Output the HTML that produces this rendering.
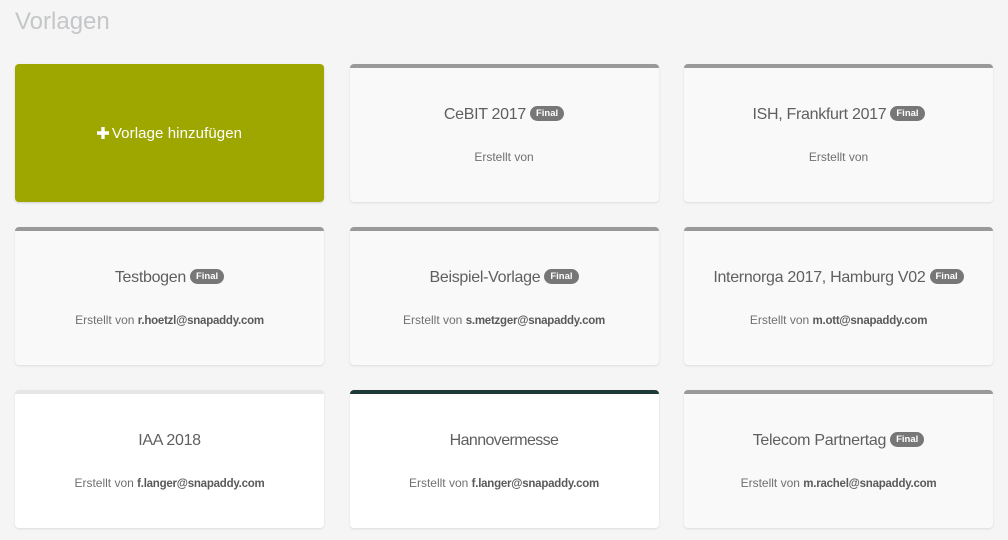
<!DOCTYPE html>
<html lang="de">
<head>
<meta charset="utf-8">
<title>Vorlagen</title>
<style>
html,body{margin:0;padding:0;width:1008px;height:540px;overflow:hidden;background:#f5f5f5;font-family:"Liberation Sans",sans-serif}
h1{position:absolute;left:15px;top:7px;margin:0;font-size:24px;line-height:29px;font-weight:400;color:#c4c6c8}
.card{position:absolute;width:309px;height:138px;box-sizing:border-box;border-radius:4px;border-top:4.5px solid #999;background:#f9f9f9;box-shadow:0 1px 2px rgba(0,0,0,.1);text-align:center;color:#666}
.white{background:#fff}
.t{position:absolute;left:0;right:0;top:36.5px;height:20px;line-height:20px;font-size:16px;letter-spacing:-.3px;color:#5f5f5f;white-space:nowrap}
.s{position:absolute;left:0;right:0;top:80.5px;height:16px;line-height:16px;font-size:12px;color:#707070;white-space:nowrap}
.s b{font-size:11.5px;color:#5a5a5a;letter-spacing:-.24px}
.b{display:inline-block;vertical-align:3px;margin-left:4px;height:15px;line-height:15px;padding:0 6px;border-radius:8px;background:#777;color:#fff;font-size:9.5px;font-weight:700;letter-spacing:0}
.add{position:absolute;left:15px;top:64px;width:309px;height:138px;border-radius:4px;background:#9ea700;box-shadow:0 1px 2px rgba(0,0,0,.15);color:#fff;font-size:15px;letter-spacing:.1px;line-height:139px;text-align:center}
.add svg{vertical-align:-1px;margin-right:3px}
</style>
</head>
<body>
<h1>Vorlagen</h1>
<div class="add"><svg width="12" height="12" viewBox="0 0 12 12"><path d="M4.3 0h3.4v4.3H12v3.4H7.7V12H4.3V7.7H0V4.3h4.3z" fill="#fff"/></svg>Vorlage hinzufügen</div>

<div class="card" style="left:349.5px;top:64px"><div class="t">CeBIT 2017<span class="b">Final</span></div><div class="s">Erstellt von</div></div>
<div class="card" style="left:684px;top:64px"><div class="t">ISH, Frankfurt 2017<span class="b">Final</span></div><div class="s">Erstellt von</div></div>

<div class="card" style="left:15px;top:227px"><div class="t">Testbogen<span class="b">Final</span></div><div class="s">Erstellt von <b>r.hoetzl@snapaddy.com</b></div></div>
<div class="card" style="left:349.5px;top:227px"><div class="t">Beispiel-Vorlage<span class="b">Final</span></div><div class="s">Erstellt von <b>s.metzger@snapaddy.com</b></div></div>
<div class="card" style="left:684px;top:227px"><div class="t">Internorga 2017, Hamburg V02<span class="b">Final</span></div><div class="s">Erstellt von <b>m.ott@snapaddy.com</b></div></div>

<div class="card white" style="left:15px;top:390px;border-top-color:#e6e6e6"><div class="t">IAA 2018</div><div class="s">Erstellt von <b>f.langer@snapaddy.com</b></div></div>
<div class="card white" style="left:349.5px;top:390px;border-top-color:#1d3a36"><div class="t" style="letter-spacing:-.6px">Hannovermesse</div><div class="s">Erstellt von <b>f.langer@snapaddy.com</b></div></div>
<div class="card" style="left:684px;top:390px"><div class="t">Telecom Partnertag<span class="b">Final</span></div><div class="s">Erstellt von <b>m.rachel@snapaddy.com</b></div></div>
</body>
</html>
